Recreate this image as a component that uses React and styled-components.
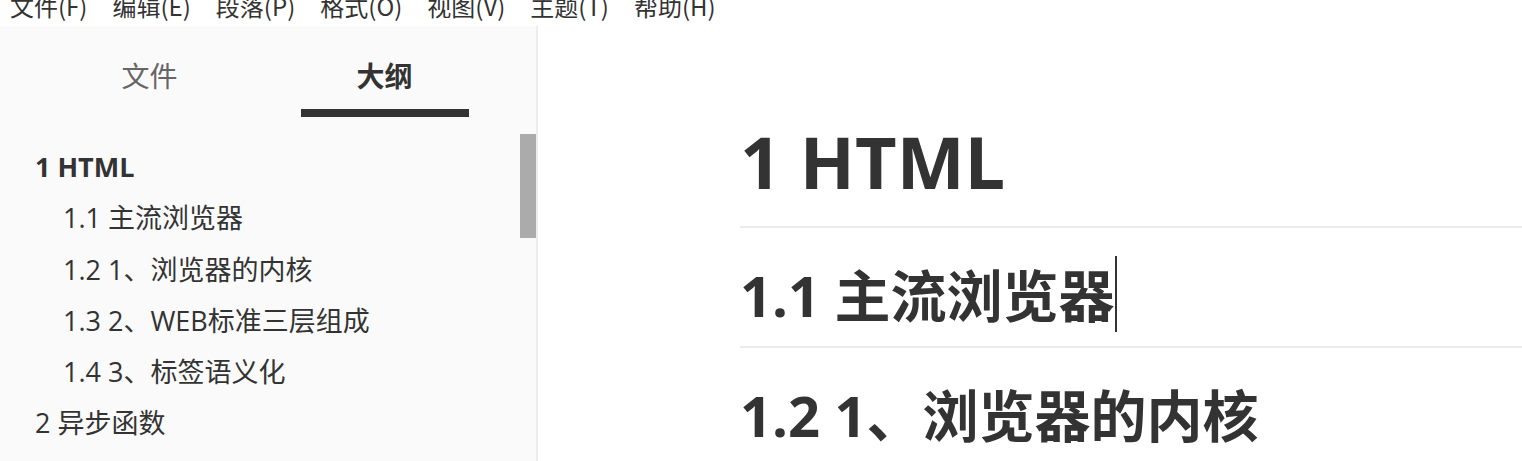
import React from "react";
import styled, { createGlobalStyle } from "styled-components";

const GlobalStyle = createGlobalStyle`
  html, body {
    margin: 0;
    padding: 0;
    background: #fff;
  }
  body {
    font-family: "Open Sans", "Noto Sans CJK SC", sans-serif;
    color: #333;
  }
`;

const menus = ["文件(F)", "编辑(E)", "段落(P)", "格式(O)", "视图(V)", "主题(T)", "帮助(H)"];

const outline = [
  { level: 1, text: "1 HTML", active: true },
  { level: 2, text: "1.1 主流浏览器" },
  { level: 2, text: "1.2 1、浏览器的内核" },
  { level: 2, text: "1.3 2、WEB标准三层组成" },
  { level: 2, text: "1.4 3、标签语义化" },
  { level: 1, text: "2 异步函数" },
  { level: 2, text: "2.1 异步函数语法" },
];

export default function App() {
  return (
    <>
      <GlobalStyle />
      <Window>
        <MenuBar>
          {menus.map((m) => (
            <MenuItem key={m}>{m}</MenuItem>
          ))}
        </MenuBar>
        <Body>
          <Sidebar>
            <TabBar>
              <Tab>
                <TabLabel>文件</TabLabel>
              </Tab>
              <Tab>
                <TabLabel active>大纲</TabLabel>
                <TabLine />
              </Tab>
            </TabBar>
            <OutlineWrap>
              <OutlineList>
                {outline.map((o) => (
                  <OutlineItem key={o.text} level={o.level} active={o.active}>
                    {o.text}
                  </OutlineItem>
                ))}
              </OutlineList>
              <ScrollTrack>
                <ScrollThumb />
              </ScrollTrack>
            </OutlineWrap>
          </Sidebar>
          <Editor>
            <H1>1 HTML</H1>
            <H2>
              1.1 主流浏览器
              <Caret />
            </H2>
            <H2>1.2 1、浏览器的内核</H2>
          </Editor>
        </Body>
      </Window>
    </>
  );
}

const Window = styled.div`
  width: 1522px;
  height: 461px;
  overflow: hidden;
  display: flex;
  flex-direction: column;
`;

const MenuBar = styled.div`
  height: 26px;
  flex: none;
  overflow: hidden;
  display: flex;
  padding-left: 10px;
  background: #fff;
`;

const MenuItem = styled.div`
  font-family: "Noto Sans CJK SC", sans-serif;
  font-size: 24px;
  line-height: 24px;
  margin-top: -6px;
  margin-right: 25px;
  color: #333;
  white-space: nowrap;
`;

const Body = styled.div`
  flex: 1;
  display: flex;
  min-height: 0;
`;

const Sidebar = styled.div`
  width: 536px;
  flex: none;
  background: #fafafa;
  border-right: 2px solid #ececec;
  display: flex;
  flex-direction: column;
`;

const TabBar = styled.div`
  display: flex;
  padding: 31px 34px 0 32px;
`;

const Tab = styled.div`
  flex: 1;
  display: flex;
  flex-direction: column;
  align-items: center;
`;

const TabLabel = styled.div`
  font-family: "Noto Sans CJK SC", sans-serif;
  font-size: 28px;
  line-height: 36px;
  font-weight: ${(p) => (p.active ? 700 : 400)};
  color: ${(p) => (p.active ? "#333" : "#666")};
`;

const TabLine = styled.div`
  margin-top: 16px;
  width: 168px;
  height: 8px;
  background: #333;
`;

const OutlineWrap = styled.div`
  flex: 1;
  display: flex;
  margin-top: 16px;
`;

const OutlineList = styled.div`
  flex: 1;
  padding-top: 8px;
`;

const OutlineItem = styled.div`
  font-size: 27px;
  line-height: 51.3px;
  white-space: nowrap;
  padding-left: ${(p) => (p.level === 1 ? 35 : 63)}px;
  font-weight: ${(p) => (p.active ? 700 : 400)};
  color: #333;
`;

const ScrollTrack = styled.div`
  width: 16px;
  flex: none;
`;

const ScrollThumb = styled.div`
  margin-top: 1px;
  height: 104px;
  background: #ababab;
`;

const Editor = styled.div`
  flex: 1;
  min-width: 0;
  padding: 92px 0 0 202px;
  background: #fff;
  overflow: hidden;
`;

const Heading = styled.div`
  font-weight: 700;
  line-height: 1.2;
  color: #333;
  white-space: nowrap;
`;

const H1 = styled(Heading)`
  font-size: 72px;
  padding-bottom: 21.6px;
  border-bottom: 2px solid #ebebeb;
`;

const H2 = styled(Heading)`
  font-size: 56px;
  margin-top: 34px;
  padding-bottom: 16.8px;
  border-bottom: 2px solid #ebebeb;
`;

const Caret = styled.span`
  display: inline-block;
  position: relative;
  width: 0;
  height: 0;
  &::after {
    content: "";
    position: absolute;
    left: 0;
    bottom: -15px;
    width: 2px;
    height: 76px;
    background: #333;
  }
`;
